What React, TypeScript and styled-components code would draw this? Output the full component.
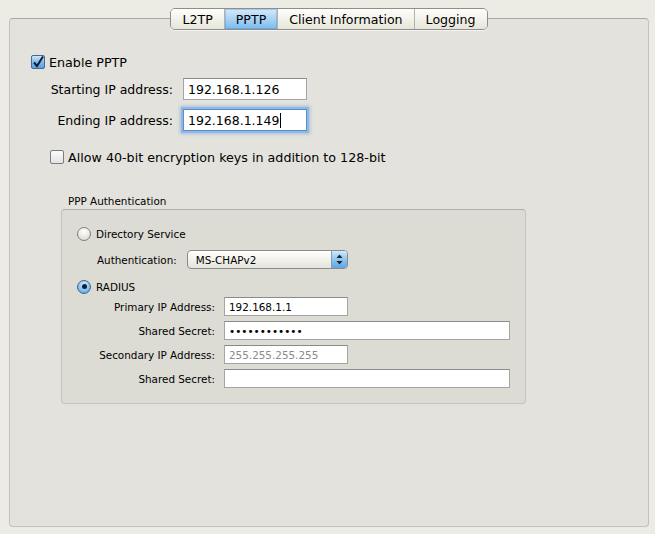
import React from 'react';
import styled, { createGlobalStyle, css } from 'styled-components';

const GlobalStyle = createGlobalStyle`
  html, body {
    margin: 0;
    padding: 0;
    background: #ecebe4;
  }
  body {
    font-family: "DejaVu Sans", "Lucida Grande", sans-serif;
    color: #000;
  }
`;

const Page = styled.div`
  width: 655px;
  height: 534px;
  box-sizing: border-box;
  padding: 18px 6px 7px 9px;
  background: #ecebe4;
`;

const Panel = styled.div`
  height: 509px;
  box-sizing: border-box;
  border: 1px solid #c2c1ba;
  border-top-color: #a9a8a2;
  border-radius: 4px;
  background: #e3e2dc;
`;

const TabBar = styled.div`
  display: flex;
  justify-content: center;
  margin-top: -11px;
`;

const TabGroup = styled.div`
  display: flex;
  height: 20px;
  border: 1px solid #8e8e8a;
  border-radius: 5px;
  overflow: hidden;
  box-shadow: 0 1px 0 rgba(255, 255, 255, 0.6);
`;

const Tab = styled.div<{ $active?: boolean }>`
  display: flex;
  align-items: center;
  padding: 0 11px;
  font-size: 12.6px;
  background: linear-gradient(#fefefb, #f3f2ea 50%, #e6e5d8);
  & + & {
    border-left: 1px solid #b5b4ac;
  }
  ${p =>
    p.$active &&
    css`
      background: linear-gradient(#d3eafb, #a9d3f5 50%, #79bcef);
      box-shadow: inset 0 0 0 1px rgba(60, 100, 170, 0.25);
    `}
`;

const Content = styled.div`
  padding: 24px 0 0 21px;
`;

const CheckRow = styled.label<{ $indent?: number }>`
  display: flex;
  align-items: center;
  gap: 4px;
  font-size: 12.7px;
  height: 16px;
  margin-left: ${p => p.$indent ?? 0}px;
`;

const Box = styled.span<{ $checked?: boolean }>`
  width: 14px;
  height: 14px;
  box-sizing: border-box;
  border: 1px solid #7d7d7d;
  border-radius: 2px;
  background: linear-gradient(#fdfdfd, #e3e3e3);
  display: flex;
  align-items: center;
  justify-content: center;
  ${p =>
    p.$checked &&
    css`
      border-color: #43679a;
      background: linear-gradient(#cfe5f8, #7fbaea 50%, #5aa2e0);
    `}
`;

const Checkbox = ({ checked }: { checked?: boolean }) => (
  <Box $checked={checked}>
    {checked && (
      <svg width="12" height="12" viewBox="0 0 12 12">
        <path d="M2 6.5 L5 10 L11 0.5" fill="none" stroke="#0d1d33" strokeWidth="2" />
      </svg>
    )}
  </Box>
);

const FieldGrid = styled.div`
  display: grid;
  grid-template-columns: 142px 124px;
  column-gap: 10px;
  row-gap: 9px;
  align-items: center;
  margin: 8px 0 0 0;
`;

const Label = styled.span<{ $small?: boolean }>`
  text-align: right;
  font-size: ${p => (p.$small ? '10.4px' : '12.5px')};
  white-space: nowrap;
`;

const TextBox = styled.div<{ $small?: boolean; $focus?: boolean; $muted?: boolean }>`
  box-sizing: border-box;
  height: ${p => (p.$small ? '19px' : '22px')};
  background: #fff;
  border: 1px solid #a5a5a5;
  border-top-color: #8a8a8a;
  padding: 0 4px;
  display: flex;
  align-items: center;
  font-size: ${p => (p.$small ? '10.4px' : '12.5px')};
  color: ${p => (p.$muted ? '#8a8a8a' : '#000')};
  white-space: nowrap;
  overflow: hidden;
  ${p =>
    p.$focus &&
    css`
      border-color: #5d8fc6;
      box-shadow: 0 0 0 2px #8eb8e6, 0 0 3px 3px rgba(110, 160, 220, 0.5);
    `}
`;

const Caret = styled.span`
  display: inline-block;
  width: 1px;
  height: 15px;
  background: #000;
  margin-left: 1px;
`;

const Spacer = styled.div<{ $h: number }>`
  height: ${p => p.$h}px;
`;

const GroupWrap = styled.div`
  margin-left: 30px;
  width: 465px;
`;

const GroupTitle = styled.div`
  font-size: 10.4px;
  margin: 0 0 2px 7px;
  height: 12px;
  line-height: 12px;
`;

const GroupBox = styled.div`
  box-sizing: border-box;
  height: 195px;
  border: 1px solid #c5c4be;
  border-top-color: #b0afa9;
  border-radius: 4px;
  background: #dcdbd4;
  padding: 16px 0 0 15px;
`;

const RadioRow = styled.label`
  display: flex;
  align-items: center;
  gap: 5px;
  font-size: 10.4px;
  height: 15px;
`;

const RadioDot = styled.span<{ $on?: boolean }>`
  width: 14px;
  height: 14px;
  box-sizing: border-box;
  border-radius: 50%;
  border: 1px solid #7f7f7f;
  background: radial-gradient(circle at 50% 30%, #ffffff, #e6e6df 60%, #cfcfc6);
  display: flex;
  align-items: center;
  justify-content: center;
  ${p =>
    p.$on &&
    css`
      border-color: #3f6594;
      background: radial-gradient(circle at 50% 30%, #d6ecfc, #88c2ef 55%, #4f98db);
      &::after {
        content: '';
        width: 5px;
        height: 5px;
        border-radius: 50%;
        background: #10203a;
      }
    `}
`;

const AuthRow = styled.div`
  display: flex;
  align-items: center;
  gap: 10px;
  margin: 9px 0 0 20px;
`;

const Popup = styled.div`
  position: relative;
  box-sizing: border-box;
  width: 161px;
  height: 19px;
  border: 1px solid #8b8b8b;
  border-radius: 4px;
  background: linear-gradient(#ffffff, #f2f2ec 50%, #e4e4dc);
  display: flex;
  align-items: center;
  padding-left: 8px;
  font-size: 10.4px;
  overflow: hidden;
`;

const PopupArrows = styled.span`
  position: absolute;
  right: 0;
  top: 0;
  bottom: 0;
  width: 15px;
  border-left: 1px solid #7f9ec4;
  background: linear-gradient(#d2e9fb, #8cc5f0 50%, #5ea6e2);
  display: flex;
  align-items: center;
  justify-content: center;
`;

const RadiusGrid = styled.div`
  display: grid;
  grid-template-columns: 138px 124px 153px;
  column-gap: 9px;
  row-gap: 5px;
  align-items: center;
  margin: 3px 0 0 0;
`;

const Wide = styled.div`
  grid-column: 2 / span 2;
`;

export default function App() {
  return (
    <>
      <GlobalStyle />
      <Page>
        <Panel>
          <TabBar>
            <TabGroup>
              <Tab>L2TP</Tab>
              <Tab $active>PPTP</Tab>
              <Tab>Client Information</Tab>
              <Tab>Logging</Tab>
            </TabGroup>
          </TabBar>
          <Content>
            <CheckRow>
              <Checkbox checked />
              Enable PPTP
            </CheckRow>
            <FieldGrid>
              <Label>Starting IP address:</Label>
              <TextBox>192.168.1.126</TextBox>
              <Label>Ending IP address:</Label>
              <TextBox $focus>
                192.168.1.149
                <Caret />
              </TextBox>
            </FieldGrid>
            <Spacer $h={18} />
            <CheckRow $indent={19}>
              <Checkbox />
              Allow 40-bit encryption keys in addition to 128-bit
            </CheckRow>
            <Spacer $h={30} />
            <GroupWrap>
              <GroupTitle>PPP Authentication</GroupTitle>
              <GroupBox>
                <RadioRow>
                  <RadioDot />
                  Directory Service
                </RadioRow>
                <AuthRow>
                  <Label $small>Authentication:</Label>
                  <Popup>
                    MS-CHAPv2
                    <PopupArrows>
                      <svg width="7" height="11" viewBox="0 0 7 11">
                        <path d="M3.5 0.5 L6.5 4 L0.5 4 Z M3.5 10.5 L6.5 7 L0.5 7 Z" fill="#1b2433" />
                      </svg>
                    </PopupArrows>
                  </Popup>
                </AuthRow>
                <Spacer $h={10} />
                <RadioRow>
                  <RadioDot $on />
                  RADIUS
                </RadioRow>
                <RadiusGrid>
                  <Label $small>Primary IP Address:</Label>
                  <TextBox $small>192.168.1.1</TextBox>
                  <span />
                  <Label $small>Shared Secret:</Label>
                  <Wide>
                    <TextBox $small>••••••••••••</TextBox>
                  </Wide>
                  <Label $small>Secondary IP Address:</Label>
                  <TextBox $small $muted>255.255.255.255</TextBox>
                  <span />
                  <Label $small>Shared Secret:</Label>
                  <Wide>
                    <TextBox $small />
                  </Wide>
                </RadiusGrid>
              </GroupBox>
            </GroupWrap>
          </Content>
        </Panel>
      </Page>
    </>
  );
}
